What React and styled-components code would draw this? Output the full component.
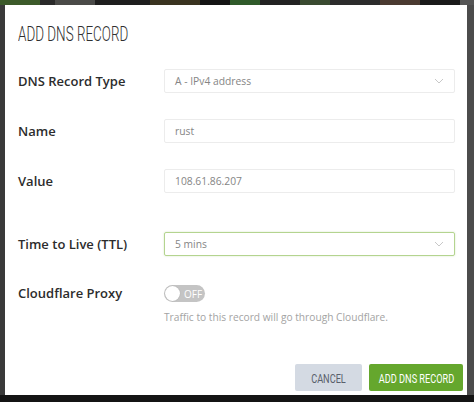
import React from "react";
import styled, { createGlobalStyle } from "styled-components";

const Global = createGlobalStyle`
  html, body { margin: 0; padding: 0; }
  body {
    width: 474px;
    height: 402px;
    overflow: hidden;
    background: #2e2e2e;
    font-family: "Open Sans", "Liberation Sans", sans-serif;
  }
`;

const Backdrop = styled.div`
  width: 474px;
  height: 402px;
  box-sizing: border-box;
  padding: 5px 7px 7px 5px;
  background:
    linear-gradient(90deg, #3c5a2a 0 40px, #2a2a2a 40px 55px, #4a4a48 55px 95px, #1e1e1e 95px 150px,
      #3a3320 150px 200px, #141414 200px 230px, #2f5a2a 230px 260px, #222 260px 300px,
      #3a4a30 300px 330px, #2c2c2c 330px 380px, #4a3a30 380px 420px, #1a1a1a 420px 460px, #555 460px)
      top / 100% 5px no-repeat,
    linear-gradient(180deg, transparent 0 395px, #141414 395px),
    linear-gradient(90deg, #3a3a3a 0 5px, #2b2b2b 5px 467px, #4c4c4c 467px);
`;

const Modal = styled.div`
  width: 462px;
  height: 390px;
  box-sizing: border-box;
  background: #ffffff;
  padding: 16px 12px 4px 13px;
  display: flex;
  flex-direction: column;
`;

const Title = styled.h1`
  margin: 0;
  height: 26px;
  font-family: "Roboto", "Liberation Sans", sans-serif;
  font-weight: 300;
  font-size: 21px;
  line-height: 26px;
  color: #2f2f2f;
  white-space: nowrap;
  span {
    display: inline-block;
    transform: scaleX(0.64);
    transform-origin: left center;
  }
`;

const Form = styled.div`
  margin-top: 22px;
  display: grid;
  grid-template-columns: 146px 291px;
  row-gap: 26px;
  align-items: center;
`;

const Label = styled.div`
  font-family: "Open Sans", "Liberation Sans", sans-serif;
  font-weight: 600;
  font-size: 13px;
  color: #2c2c2c;
  align-self: ${(p) => (p.$top ? "start" : "center")};
  line-height: ${(p) => (p.$top ? "17px" : "normal")};
  margin-top: ${(p) => p.$mt || 0}px;
`;

const Field = styled.div`
  height: 24px;
  box-sizing: border-box;
  border: 1px solid ${(p) => (p.$focus ? "#b4d48f" : "#ececec")};
  border-radius: 2px;
  box-shadow: ${(p) => (p.$focus ? "0 0 2px rgba(130,180,80,0.35)" : "none")};
  display: flex;
  align-items: center;
  justify-content: space-between;
  padding: 0 10px 0 10px;
  font-size: 10.3px;
  color: #858585;
  margin-top: ${(p) => p.$mt || 0}px;
`;

const Chevron = styled.svg`
  width: 10px;
  height: 6px;
  flex: none;
`;

const ToggleCell = styled.div`
  display: flex;
  flex-direction: column;
  gap: 8px;
  margin-top: 3px;
`;

const Toggle = styled.div`
  width: 41px;
  height: 17px;
  border-radius: 9px;
  background: #c4c4c4;
  box-sizing: border-box;
  display: flex;
  align-items: center;
  padding: 0 1px;
  gap: 4px;
`;

const Knob = styled.div`
  width: 15px;
  height: 15px;
  border-radius: 50%;
  background: #fff;
  box-shadow: 0 0 1px rgba(0, 0, 0, 0.25);
`;

const ToggleText = styled.span`
  font-size: 10px;
  color: #fff;
  font-family: "Open Sans", sans-serif;
`;

const Help = styled.div`
  font-size: 10.2px;
  color: #a3a3a3;
`;

const Footer = styled.div`
  margin-top: auto;
  margin-right: -8px;
  display: flex;
  justify-content: flex-end;
  gap: 7px;
`;

const Button = styled.button`
  height: 27px;
  width: ${(p) => p.$w}px;
  border: none;
  border-radius: 2px;
  padding: 0;
  background: ${(p) => (p.$primary ? "#65a72d" : "#d4dae3")};
  color: ${(p) => (p.$primary ? "#ffffff" : "#59606b")};
  font-family: "Roboto", "Liberation Sans", sans-serif;
  font-size: 13.5px;
  font-weight: 400;
  white-space: nowrap;
  display: flex;
  align-items: center;
  justify-content: center;
  span {
    display: inline-block;
    transform: scaleX(0.68);
  }
`;

const Arrow = () => (
  <Chevron viewBox="0 0 10 6">
    <path d="M1 1 L5 5 L9 1" fill="none" stroke="#c8c8c8" strokeWidth="1" />
  </Chevron>
);

export default function App() {
  return (
    <>
      <Global />
      <Backdrop>
        <Modal>
          <Title>
            <span>ADD DNS RECORD</span>
          </Title>
          <Form>
            <Label>DNS Record Type</Label>
            <Field>
              <span>A - IPv4 address</span>
              <Arrow />
            </Field>
            <Label>Name</Label>
            <Field>
              <span>rust</span>
            </Field>
            <Label>Value</Label>
            <Field>
              <span>108.61.86.207</span>
            </Field>
            <Label $mt={13}>Time to Live (TTL)</Label>
            <Field $focus $mt={13}>
              <span>5 mins</span>
              <Arrow />
            </Field>
            <Label $top $mt={3}>Cloudflare Proxy</Label>
            <ToggleCell>
              <Toggle>
                <Knob />
                <ToggleText>OFF</ToggleText>
              </Toggle>
              <Help>Traffic to this record will go through Cloudflare.</Help>
            </ToggleCell>
          </Form>
          <Footer>
            <Button $w={67}>
              <span>CANCEL</span>
            </Button>
            <Button $w={94} $primary>
              <span>ADD DNS RECORD</span>
            </Button>
          </Footer>
        </Modal>
      </Backdrop>
    </>
  );
}
